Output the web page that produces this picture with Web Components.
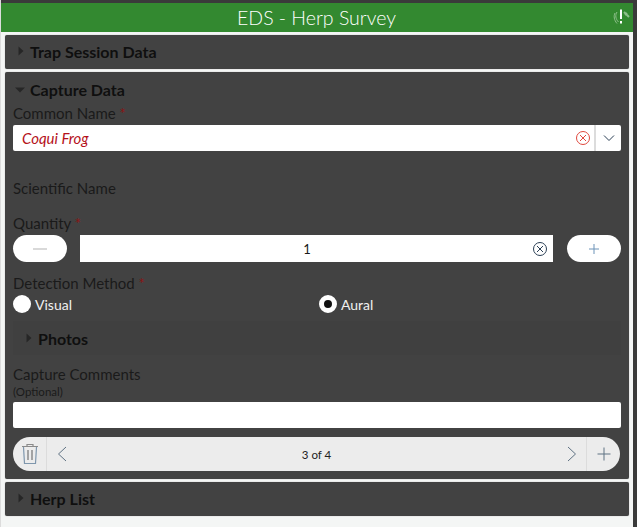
<!DOCTYPE html>
<html>
<head>
<meta charset="utf-8">
<title>EDS - Herp Survey</title>
<style>
    html, body { margin: 0; padding: 0; height: 100%; }
    body {
        background-color: #f4f6f5;
        font-family: Lato, "Open Sans", sans-serif;
        overflow: hidden;
    }
</style>
</head>
<body>
<app-shell>
    <survey-panel title="Trap Session Data"></survey-panel>
    <survey-panel title="Capture Data" open>
        <survey-field label="Common Name" required>
            <value-input value="Coqui Frog" tone="error" combo></value-input>
        </survey-field>
        <survey-field label="Scientific Name" style="margin-top:28px"></survey-field>
        <survey-field label="Quantity" required style="margin-top:17px">
            <number-stepper value="1"></number-stepper>
        </survey-field>
        <survey-field label="Detection Method" required style="margin-top:12px">
            <radio-group options="Visual,Aural" selected="Aural"></radio-group>
        </survey-field>
        <sub-panel title="Photos"></sub-panel>
        <survey-field label="Capture Comments" hint="(Optional)" style="margin-top:10px">
            <value-input></value-input>
        </survey-field>
        <page-nav current="3" total="4"></page-nav>
    </survey-panel>
    <survey-panel title="Herp List"></survey-panel>
</app-shell>

<script>
const ARROW_RIGHT = '<svg width="6" height="10" viewBox="0 0 6 10"><path d="M0.5 0.5L5.5 5L0.5 9.5z" fill="#262626"/></svg>';
const ARROW_DOWN = '<svg width="10" height="6" viewBox="0 0 10 6"><path d="M0 0.5H10L5 5.5z" fill="#262626"/></svg>';

class AppShell extends HTMLElement {
    constructor() {
        super();
        this.attachShadow({ mode: 'open' });
        this.shadowRoot.innerHTML = `
            <style>
                :host {
                    display: block;
                    box-sizing: border-box;
                    height: 527px;
                    border-right: 4px solid #3a3a3a;
                    border-left: 1px solid #dcdcdc;
                }
                header {
                    height: 29px;
                    border-top: 3px solid #3a3a3a;
                    background-color: #338930;
                    display: flex;
                    align-items: center;
                    justify-content: center;
                    position: relative;
                    color: #fff;
                    font-size: 19.500px;
                    font-weight: 300;
                }
                header span { margin-left: -1px; }
                .gps { position: absolute; right: 2px; top: 5px; }
                main {
                    display: flex;
                    flex-direction: column;
                    gap: 3px;
                    padding: 3px 4px 0 4px;
                }
            </style>
            <header>
                <span>EDS - Herp Survey</span>
                <svg class="gps" width="18" height="18" viewBox="0 0 18 18" fill="none">
                    <path d="M4 4C2 7 2.500 11 5.500 14M2 5C0.500 8 1 12 4 15.500" stroke="#8fc08c" stroke-width="1"/>
                    <path d="M11 4l5 5M12 7l2-2" stroke="#8fc08c" stroke-width="2"/>
                    <path d="M8 1.500V11" stroke="#fff" stroke-width="2"/>
                    <path d="M8 13v2.500" stroke="#fff" stroke-width="2"/>
                </svg>
            </header>
            <main><slot></slot></main>
        `;
    }
}

class SurveyPanel extends HTMLElement {
    constructor() {
        super();
        this.attachShadow({ mode: 'open' });
    }

    connectedCallback() {
        const open = this.hasAttribute('open');
        this.shadowRoot.innerHTML = `
            <style>
                :host {
                    display: block;
                    background-color: #424242;
                    border-radius: 2px;
                    box-shadow: 0 0 1px #8c8c8c;
                    padding: 0 8px;
                }
                .head {
                    height: 34px;
                    box-sizing: border-box;
                    padding-bottom: 2px;
                    display: flex;
                    align-items: center;
                    color: #0f0f0f;
                    font-size: 16px;
                    font-weight: 700;
                }
                .arrow { width: 12px; margin-left: 5px; display: flex; }
                .open-head { height: 32px; padding-bottom: 2px; padding-top: 5px; }
                .open-head .arrow { width: 15px; margin-left: 2px; }
                .body { padding-bottom: 8px; }
            </style>
            <div class="head ${open ? 'open-head' : ''}">
                <span class="arrow">${open ? ARROW_DOWN : ARROW_RIGHT}</span>
                <span>${this.getAttribute('title')}</span>
            </div>
            ${open ? '<div class="body"><slot></slot></div>' : ''}
        `;
    }
}

class SubPanel extends HTMLElement {
    constructor() {
        super();
        this.attachShadow({ mode: 'open' });
    }

    connectedCallback() {
        this.shadowRoot.innerHTML = `
            <style>
                :host {
                    display: flex;
                    align-items: center;
                    height: 34px;
                    margin-top: 8px;
                    background-color: #404040;
                    color: #0f0f0f;
                    font-size: 16px;
                    font-weight: 700;
                }
                .arrow { margin-left: 13px; width: 12px; display: flex; }
            </style>
            <span class="arrow">${ARROW_RIGHT}</span>
            <span>${this.getAttribute('title')}</span>
        `;
    }
}

class SurveyField extends HTMLElement {
    constructor() {
        super();
        this.attachShadow({ mode: 'open' });
    }

    connectedCallback() {
        const hint = this.getAttribute('hint');
        this.shadowRoot.innerHTML = `
            <style>
                :host { display: block; color: #1a1a1a; }
                .label { font-size: 15px; line-height: 18px; }
                .req { color: #8a1414; }
                .hint { font-size: 11.500px; line-height: 12px; margin-top: 3px; margin-bottom: 4px; }
                .control { margin-top: 3px; }
                .hint + .control { margin-top: 0; }
            </style>
            <div class="label">${this.getAttribute('label')}${this.hasAttribute('required') ? ' <span class="req">*</span>' : ''}</div>
            ${hint ? `<div class="hint">${hint}</div>` : ''}
            <div class="control"><slot></slot></div>
        `;
    }
}

class ValueInput extends HTMLElement {
    constructor() {
        super();
        this.attachShadow({ mode: 'open' });
    }

    connectedCallback() {
        const value = this.getAttribute('value') || '';
        const error = this.getAttribute('tone') === 'error';
        const clear = error ? '#e0483e' : '#2b3f55';
        this.shadowRoot.innerHTML = `
            <style>
                :host {
                    display: flex;
                    align-items: center;
                    height: 26px;
                    background-color: #fff;
                    border-radius: 2px;
                    color: #b5121b;
                    font-size: 15px;
                    font-style: italic;
                }
                .val { flex: 1; padding-left: 9px; }
                .x { display: flex; margin-right: 3px; }
                .drop {
                    width: 25px;
                    height: 100%;
                    border-left: 2px solid #dcdcdc;
                    display: flex;
                    align-items: center;
                    justify-content: center;
                }
            </style>
            <span class="val">${value}</span>
            ${value ? `<span class="x"><svg width="16" height="16" viewBox="0 0 16 16" fill="none" stroke="${clear}"><circle cx="8" cy="8" r="6.500"/><path d="M5 5l6 6M11 5l-6 6"/></svg></span>` : ''}
            ${this.hasAttribute('combo') ? '<span class="drop"><svg width="12" height="8" viewBox="0 0 12 8" fill="none" stroke="#2b3f55"><path d="M1 1.500l5 5 5-5"/></svg></span>' : ''}
        `;
    }
}

class NumberStepper extends HTMLElement {
    constructor() {
        super();
        this.attachShadow({ mode: 'open' });
    }

    connectedCallback() {
        this.shadowRoot.innerHTML = `
            <style>
                :host { display: flex; height: 27px; gap: 13px; }
                button {
                    width: 54px;
                    flex: none;
                    padding: 0;
                    border: 0;
                    border-radius: 14px;
                    background-color: #fff;
                    display: flex;
                    align-items: center;
                    justify-content: center;
                }
                .num {
                    flex: 1;
                    background-color: #fff;
                    display: flex;
                    align-items: center;
                    position: relative;
                    justify-content: center;
                    padding-right: 19px;
                    color: #1a1a1a;
                    font-size: 13px;
                }
                .x { position: absolute; right: 5px; top: 6px; display: flex; }
                .plus { margin-left: 1px; }
            </style>
            <button><svg width="14" height="2" viewBox="0 0 14 2"><path d="M0 1H14" stroke="#b3b3b3"/></svg></button>
            <div class="num">
                <span>${this.getAttribute('value')}</span>
                <span class="x"><svg width="16" height="16" viewBox="0 0 16 16" fill="none" stroke="#2b3f55"><circle cx="8" cy="8" r="6.500"/><path d="M5 5l6 6M11 5l-6 6"/></svg></span>
            </div>
            <button class="plus"><svg width="12" height="12" viewBox="0 0 12 12"><path d="M6 1V11M1 6H11" stroke="#6d93b8"/></svg></button>
        `;
    }
}

class RadioGroup extends HTMLElement {
    constructor() {
        super();
        this.attachShadow({ mode: 'open' });
    }

    connectedCallback() {
        const selected = this.getAttribute('selected');
        const items = this.getAttribute('options').split(',').map(name => `
            <label>
                <span class="dot ${name === selected ? 'on' : ''}"></span>
                <span>${name}</span>
            </label>
        `).join('');
        this.shadowRoot.innerHTML = `
            <style>
                :host {
                    display: grid;
                    grid-template-columns: 306px 1fr;
                    height: 18px;
                    color: #f0f0f0;
                    font-size: 14px;
                }
                label { display: flex; align-items: center; gap: 4px; }
                .dot {
                    width: 18px;
                    height: 18px;
                    border-radius: 50%;
                    background-color: #fff;
                    box-sizing: border-box;
                }
                .dot.on { border: 5px solid #fff; background-color: #111; }
            </style>
            ${items}
        `;
    }
}

class PageNav extends HTMLElement {
    constructor() {
        super();
        this.attachShadow({ mode: 'open' });
    }

    connectedCallback() {
        this.shadowRoot.innerHTML = `
            <style>
                :host {
                    display: flex;
                    align-items: center;
                    height: 34px;
                    margin-top: 9px;
                    margin-right: 1px;
                    background-color: #ececec;
                    border-radius: 17px;
                    color: #222;
                    font-size: 11.500px;
                }
                .cell { height: 100%; display: flex; align-items: center; justify-content: center; }
                .trash { width: 33px; border-right: 1px solid #dcdcdc; box-sizing: content-box; }
                .prev, .next { width: 29px; }
                .pos { flex: 1; }
                .add { width: 33px; border-left: 1px solid #dcdcdc; }
            </style>
            <div class="cell trash">
                <svg width="18" height="22" viewBox="0 0 18 22" fill="none" stroke="#8a8a8a">
                    <path d="M1 3.500H17M6 3V1.500H12V3" stroke-width="1.200"/>
                    <path d="M2.500 4L3.500 20.500H14.500L15.500 4" stroke="#7f97ad" stroke-width="1.200"/>
                    <path d="M7 7V17M11 7V17" stroke-width="1.500"/>
                </svg>
            </div>
            <div class="cell prev"><svg width="10" height="16" viewBox="0 0 10 16" fill="none" stroke="#5f7283"><path d="M9 1L1.500 8L9 15"/></svg></div>
            <div class="cell pos">${this.getAttribute('current')} of ${this.getAttribute('total')}</div>
            <div class="cell next"><svg width="10" height="16" viewBox="0 0 10 16" fill="none" stroke="#5f7283"><path d="M1 1L8.500 8L1 15"/></svg></div>
            <div class="cell add"><svg width="14" height="14" viewBox="0 0 14 14"><path d="M7 0.500V13.500M0.500 7H13.500" stroke="#5f7283"/></svg></div>
        `;
    }
}

customElements.define('app-shell', AppShell);
customElements.define('survey-panel', SurveyPanel);
customElements.define('sub-panel', SubPanel);
customElements.define('survey-field', SurveyField);
customElements.define('value-input', ValueInput);
customElements.define('number-stepper', NumberStepper);
customElements.define('radio-group', RadioGroup);
customElements.define('page-nav', PageNav);
</script>
</body>
</html>
